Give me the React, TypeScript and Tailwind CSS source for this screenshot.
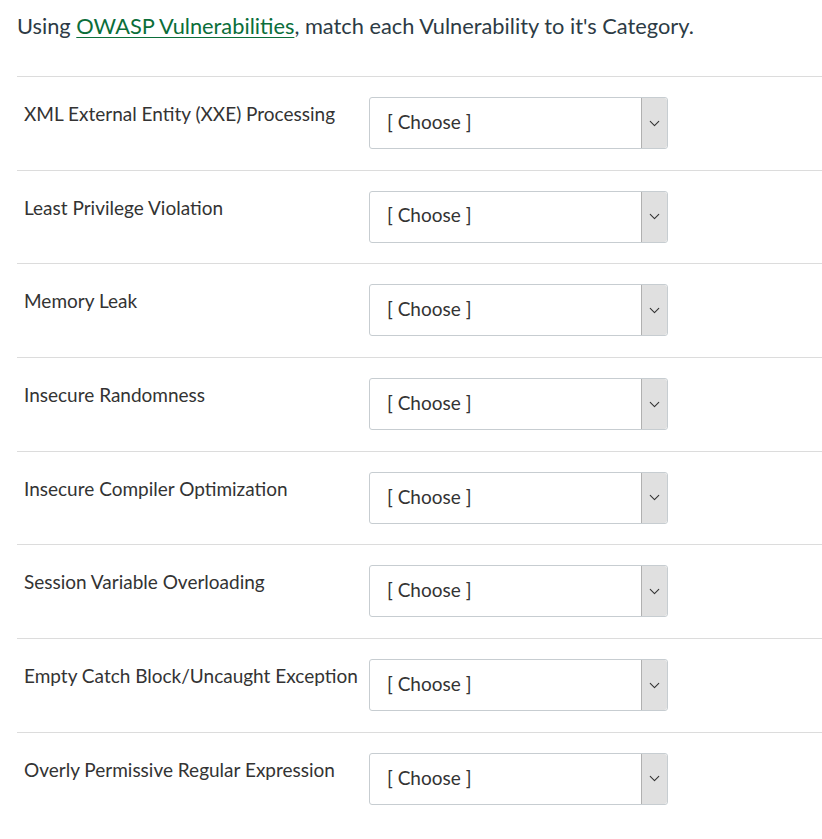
import { ChevronDown } from "lucide-react";

const items = [
  "XML External Entity (XXE) Processing",
  "Least Privilege Violation",
  "Memory Leak",
  "Insecure Randomness",
  "Insecure Compiler Optimization",
  "Session Variable Overloading",
  "Empty Catch Block/Uncaught Exception",
  "Overly Permissive Regular Expression",
];

const ChooseBox = () => (
  <div className="flex h-[52px] w-[299px] shrink-0 rounded-[3px] border border-[#c7cdd1] bg-white">
    <div className="flex flex-1 items-center pb-[2px] pl-[17px] text-[19px] text-[#333]">[ Choose ]</div>
    <div className="flex w-[26px] items-center justify-center rounded-r-[3px] border-l border-[#b0b0b0] bg-[#e0e0e0]">
      <ChevronDown className="h-[17px] w-[17px] text-[#333]" strokeWidth={1.5} />
    </div>
  </div>
);

export default function App() {
  return (
    <div className="min-h-screen bg-white pl-[17px] pt-[9px] font-['Lato',sans-serif] text-[#2d3b45]">
      <p className="text-[21.8px] leading-[33px]">
        Using{" "}
        <a href="#" className="text-[#0b6e3a] underline decoration-1 underline-offset-[3px]">
          OWASP Vulnerabilities
        </a>
        , match each Vulnerability to it's Category.
      </p>
      <div className="mt-[34px]">
        {items.map((label) => (
          <div key={label} className="flex border-t border-[#dcdcdc] pt-[20px] pb-[20.7px]">
            <div className="w-[352px] shrink-0 pl-[7px] pt-[4px] text-[19px] leading-[26px] text-[#333]">
              {label}
            </div>
            <ChooseBox />
          </div>
        ))}
      </div>
    </div>
  );
}
